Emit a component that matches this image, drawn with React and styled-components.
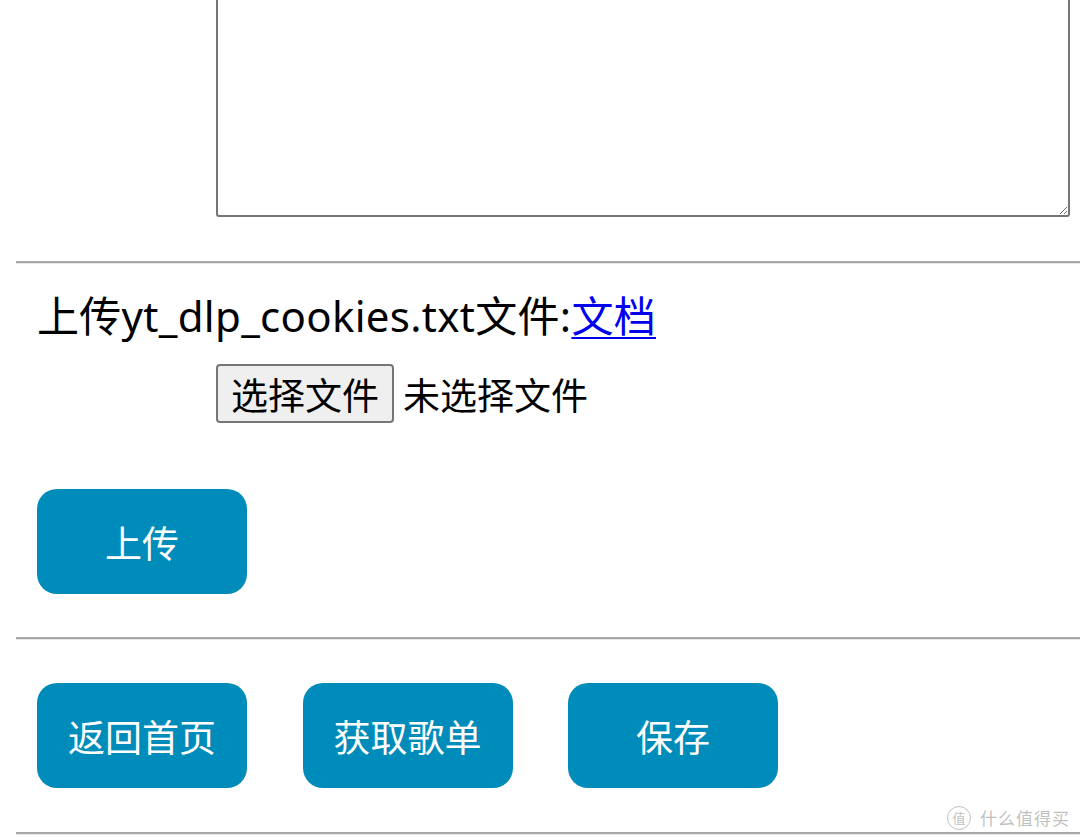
import React from 'react'
import styled, {createGlobalStyle} from 'styled-components'

const GlobalStyle = createGlobalStyle`
  html, body {
    margin: 0;
    padding: 0;
    background: #fff;
    overflow: hidden;
  }
  body {
    font-family: "Segoe UI", "Noto Sans", "Noto Sans CJK SC", sans-serif;
    color: #000;
  }
`

const Page = styled.div`
  position: relative;
  width: 1080px;
  height: 840px;
  padding-left: 16px;
  box-sizing: border-box;
  overflow: hidden;
`

const Section = styled.div`
  padding: 0 0 0 21px;
`

const Notes = styled.textarea`
  display: block;
  box-sizing: border-box;
  margin: -30px 0 0 179px;
  width: 854px;
  height: 247px;
  border: 2px solid #767676;
  border-radius: 3px;
  resize: both;
  background: #fff;
`

const Rule = styled.hr`
  margin: ${p => p.$top}px 0 0 0;
  height: 0;
  border: 0;
  border-top: 2px solid #a8a8a8;
  border-bottom: 1px solid #e8e8e8;
`

const Label = styled.div`
  margin-top: 22px;
  font-size: 42px;
  line-height: 60px;
  letter-spacing: 0.3px;
  white-space: nowrap;

  a {
    color: #0000ee;
    text-decoration: underline;
    text-underline-offset: 5px;
    text-decoration-thickness: 2px;
  }
`

const FileRow = styled.div`
  display: flex;
  align-items: center;
  gap: 9px;
  margin: 18px 0 0 179px;
  font-size: 37px;
  white-space: nowrap;
`

const PickButton = styled.button`
  box-sizing: border-box;
  width: 178px;
  height: 59px;
  padding: 0;
  font: inherit;
  font-size: 37px;
  color: #000;
  background: #efefef;
  border: 2px solid #767676;
  border-radius: 4px;
`

const ButtonRow = styled.div`
  display: flex;
  gap: 55.5px;
  margin-top: ${p => p.$top}px;
`

const ActionButton = styled.button`
  box-sizing: border-box;
  width: 210px;
  height: 105px;
  padding: 0;
  border: none;
  border-radius: 20px;
  background: #008cba;
  color: #fff;
  font: inherit;
  font-size: 37px;
  cursor: pointer;
`

const Watermark = styled.div`
  position: absolute;
  right: 10px;
  bottom: 10px;
  display: flex;
  align-items: center;
  gap: 9px;
  color: rgba(170, 170, 170, 0.75);
  font-family: "Noto Sans CJK SC", sans-serif;
  font-size: 17px;
  letter-spacing: 1px;
`

const Badge = styled.span`
  display: inline-flex;
  align-items: center;
  justify-content: center;
  width: 22px;
  height: 22px;
  border: 1.5px solid rgba(170, 170, 170, 0.75);
  border-radius: 50%;
  font-size: 13px;
  letter-spacing: 0;
`

export default function App() {
  return (
    <Page>
      <GlobalStyle/>
      <Section>
        <Notes/>
      </Section>
      <Rule $top={44}/>
      <Section>
        <Label>上传yt_dlp_cookies.txt文件:<a href='#'>文档</a></Label>
        <FileRow>
          <PickButton>选择文件</PickButton>
          <span>未选择文件</span>
        </FileRow>
        <ButtonRow $top={66}>
          <ActionButton>上传</ActionButton>
        </ButtonRow>
      </Section>
      <Rule $top={43}/>
      <Section>
        <ButtonRow $top={43}>
          <ActionButton>返回首页</ActionButton>
          <ActionButton>获取歌单</ActionButton>
          <ActionButton>保存</ActionButton>
        </ButtonRow>
      </Section>
      <Rule $top={44}/>
      <Watermark>
        <Badge>值</Badge>
        <span>什么值得买</span>
      </Watermark>
    </Page>
  )
}
